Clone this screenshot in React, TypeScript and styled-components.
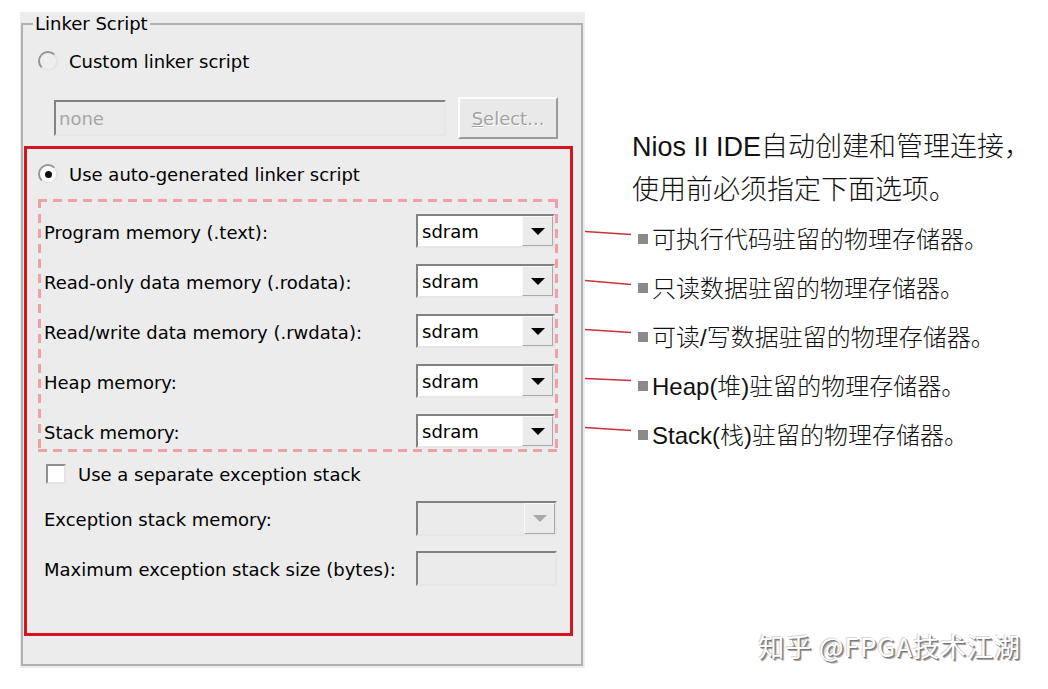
import React from "react";
import styled, { createGlobalStyle } from "styled-components";

const GlobalStyle = createGlobalStyle`
  html, body { margin: 0; padding: 0; background: #ffffff; }
  body { width: 1048px; height: 689px; overflow: hidden; }
  * { box-sizing: border-box; }
`;

const Page = styled.div`
  position: relative;
  display: flex;
  align-items: flex-start;
  width: 1048px;
  height: 689px;
  padding: 12px 0 0 20px;
  background: #ffffff;
`;

const Dialog = styled.div`
  flex: none;
  width: 565px;
  height: 656px;
  padding: 0 3px 0 1px;
  background: #ececec;
  font-family: "DejaVu Sans", "Liberation Sans", sans-serif;
  font-size: 18px;
  color: #000;
`;

const GroupBox = styled.fieldset`
  margin: 0;
  padding: 0 0 28px 0;
  min-width: 0;
  width: 562px;
  border: 2px solid #b0b0b0;
`;

const Legend = styled.legend`
  margin-left: 10px;
  padding: 0 2px;
  line-height: 24px;
  height: 24px;
`;

const RadioRow = styled.div<{ $top: number; $left: number }>`
  display: flex;
  align-items: center;
  gap: 11px;
  height: 24px;
  margin-top: ${(p) => p.$top}px;
  padding-left: ${(p) => p.$left}px;
  white-space: nowrap;
`;

const Radio = styled.span<{ $checked?: boolean }>`
  position: relative;
  flex: none;
  width: 20px;
  height: 20px;
  border-radius: 50%;
  border: 2px solid;
  border-color: #959595 #e2e2e2 #e6e6e6 #959595;
  background: ${(p) => (p.$checked ? "#ffffff" : "#eeeeee")};
  &::after {
    content: "";
    display: ${(p) => (p.$checked ? "block" : "none")};
    position: absolute;
    left: 50%;
    top: 50%;
    width: 7px;
    height: 7px;
    margin: -3.5px 0 0 -3.5px;
    border-radius: 50%;
    background: #111;
  }
`;

const FileRow = styled.div`
  display: flex;
  align-items: center;
  gap: 12px;
  margin-top: 24px;
  padding-left: 31px;
  height: 42px;
`;

const Sunken = styled.div<{ $disabled?: boolean }>`
  display: flex;
  align-items: center;
  border: 2px solid;
  border-color: #828282 #e6e6e6 #e6e6e6 #828282;
  background: ${(p) => (p.$disabled ? "#ebebeb" : "#ffffff")};
  color: ${(p) => (p.$disabled ? "#a6a6a6" : "#000")};
`;

const PathField = styled(Sunken)`
  width: 392px;
  height: 36px;
  padding-left: 3px;
`;

const PushButton = styled.div`
  display: flex;
  align-items: center;
  justify-content: center;
  width: 100px;
  height: 42px;
  border: 2px solid;
  border-color: #ffffff #9a9a9a #9a9a9a #ffffff;
  background: #e9e9e9;
  color: #a3a3a3;
  text-shadow: 1px 1px 0 #ffffff;
  u { text-decoration: underline; }
`;

const RedBox = styled.div`
  margin: 7px 0 0 1px;
  width: 549px;
  height: 490px;
  border: 3px solid #d4151d;
`;

const dash = "#f0a0a8";

const DashedBox = styled.div`
  margin: 13px 12px 0 11px;
  padding: 15px 3px 4px 6px;
  background:
    repeating-linear-gradient(90deg, ${dash} 0 9px, transparent 9px 15px) left top / 100% 3px no-repeat,
    repeating-linear-gradient(90deg, ${dash} 0 9px, transparent 9px 15px) left bottom / 100% 3px no-repeat,
    repeating-linear-gradient(180deg, ${dash} 0 9px, transparent 9px 15px) left top / 3px 100% no-repeat,
    repeating-linear-gradient(180deg, ${dash} 0 9px, transparent 9px 15px) right top / 3px 100% no-repeat;
`;

const FieldGrid = styled.div<{ $col: number; $row: number; $gap: number }>`
  display: grid;
  grid-template-columns: 1fr ${(p) => p.$col}px;
  grid-auto-rows: ${(p) => p.$row}px;
  row-gap: ${(p) => p.$gap}px;
  align-items: center;
`;

const ExtraGrid = styled(FieldGrid)`
  margin-top: 17px;
  padding: 0 13px 0 17px;
`;

const Label = styled.span`
  white-space: nowrap;
  padding-top: 2px;
`;

const Combo = styled(Sunken)`
  height: 100%;
  justify-content: space-between;
`;

const ComboValue = styled.span`
  padding-left: 4px;
`;

const ComboButton = styled.span<{ $disabled?: boolean }>`
  display: flex;
  align-items: center;
  justify-content: center;
  width: 31px;
  height: 100%;
  border: 1px solid;
  border-color: #fafafa #a9a9a9 #a9a9a9 #fafafa;
  background: #ebebeb;
  &::after {
    content: "";
    width: 0;
    height: 0;
    border-left: 7px solid transparent;
    border-right: 7px solid transparent;
    border-top: 7px solid ${(p) => (p.$disabled ? "#a9a9a9" : "#000")};
  }
`;

const DisabledField = styled(Sunken)`
  height: 100%;
`;

const CheckRow = styled.div`
  display: flex;
  align-items: center;
  gap: 12px;
  height: 20px;
  margin-top: 12px;
  padding-left: 19px;
  white-space: nowrap;
`;

const CheckBox = styled.span`
  flex: none;
  width: 20px;
  height: 20px;
  border: 2px solid;
  border-color: #8f8f8f #e4e4e4 #e4e4e4 #8f8f8f;
  background: #ffffff;
`;

const Notes = styled.div`
  flex: none;
  padding-top: 114px;
  font-family: "Liberation Sans", "Noto Sans CJK SC", sans-serif;
  font-weight: 300;
  color: #111;
`;

const Heading = styled.div`
  padding-left: 47px;
  font-size: 27px;
  line-height: 43px;
  white-space: nowrap;
  span { display: block; }
`;

const NoteList = styled.div`
  margin-top: 1px;
`;

const NoteRow = styled.div`
  display: flex;
  align-items: center;
  height: 49px;
  font-size: 24px;
  white-space: nowrap;
`;

const Pointer = styled.svg`
  flex: none;
  width: 46px;
  height: 14px;
  margin-bottom: 2px;
`;

const Bullet = styled.span`
  flex: none;
  width: 10px;
  height: 10px;
  margin: 2px 4px 0 7px;
  background: #8a8a8a;
`;

const Watermark = styled.div`
  position: absolute;
  right: 27px;
  bottom: 28px;
  font-family: "Noto Sans CJK SC", "Liberation Sans", sans-serif;
  font-size: 26px;
  line-height: 30px;
  letter-spacing: 1px;
  color: #ffffff;
  text-shadow: 1px 1px 0 #7a7a7a, 2px 2px 1px #9a9a9a, -1px -1px 0 #d8d8d8;
  white-space: nowrap;
`;

const memRows = [
  "Program memory (.text):",
  "Read-only data memory (.rodata):",
  "Read/write data memory (.rwdata):",
  "Heap memory:",
  "Stack memory:",
];

const notes: { text: string; slope: number }[] = [
  { text: "可执行代码驻留的物理存储器。", slope: 3 },
  { text: "只读数据驻留的物理存储器。", slope: 4 },
  { text: "可读/写数据驻留的物理存储器。", slope: 3 },
  { text: "Heap(堆)驻留的物理存储器。", slope: 2 },
  { text: "Stack(栈)驻留的物理存储器。", slope: 3 },
];

export default function App() {
  return (
    <>
      <GlobalStyle />
      <Page>
        <Dialog>
          <GroupBox>
            <Legend>Linker Script</Legend>
            <RadioRow $top={13} $left={15}>
              <Radio />
              <span>Custom linker script</span>
            </RadioRow>
            <FileRow>
              <PathField $disabled>none</PathField>
              <PushButton>
                <span>
                  <u>S</u>elect...
                </span>
              </PushButton>
            </FileRow>
            <RedBox>
              <RadioRow $top={13} $left={11}>
                <Radio $checked />
                <span>Use auto-generated linker script</span>
              </RadioRow>
              <DashedBox>
                <FieldGrid $col={139} $row={34} $gap={16}>
                  {memRows.map((label) => (
                    <React.Fragment key={label}>
                      <Label>{label}</Label>
                      <Combo>
                        <ComboValue>sdram</ComboValue>
                        <ComboButton />
                      </Combo>
                    </React.Fragment>
                  ))}
                </FieldGrid>
              </DashedBox>
              <CheckRow>
                <CheckBox />
                <span>Use a separate exception stack</span>
              </CheckRow>
              <ExtraGrid $col={141} $row={35} $gap={15}>
                <Label>Exception stack memory:</Label>
                <Combo $disabled>
                  <ComboValue />
                  <ComboButton $disabled />
                </Combo>
                <Label>Maximum exception stack size (bytes):</Label>
                <DisabledField $disabled />
              </ExtraGrid>
            </RedBox>
          </GroupBox>
        </Dialog>
        <Notes>
          <Heading>
            <span>Nios II IDE自动创建和管理连接，</span>
            <span>使用前必须指定下面选项。</span>
          </Heading>
          <NoteList>
            {notes.map((n) => (
              <NoteRow key={n.text}>
                <Pointer viewBox="0 0 46 14">
                  <line
                    x1="0"
                    y1={1.5}
                    x2="46"
                    y2={1.5 + n.slope}
                    stroke="#c9313b"
                    strokeWidth="1.5"
                  />
                </Pointer>
                <Bullet />
                <span>{n.text}</span>
              </NoteRow>
            ))}
          </NoteList>
        </Notes>
        <Watermark>知乎 @FPGA技术江湖</Watermark>
      </Page>
    </>
  );
}
